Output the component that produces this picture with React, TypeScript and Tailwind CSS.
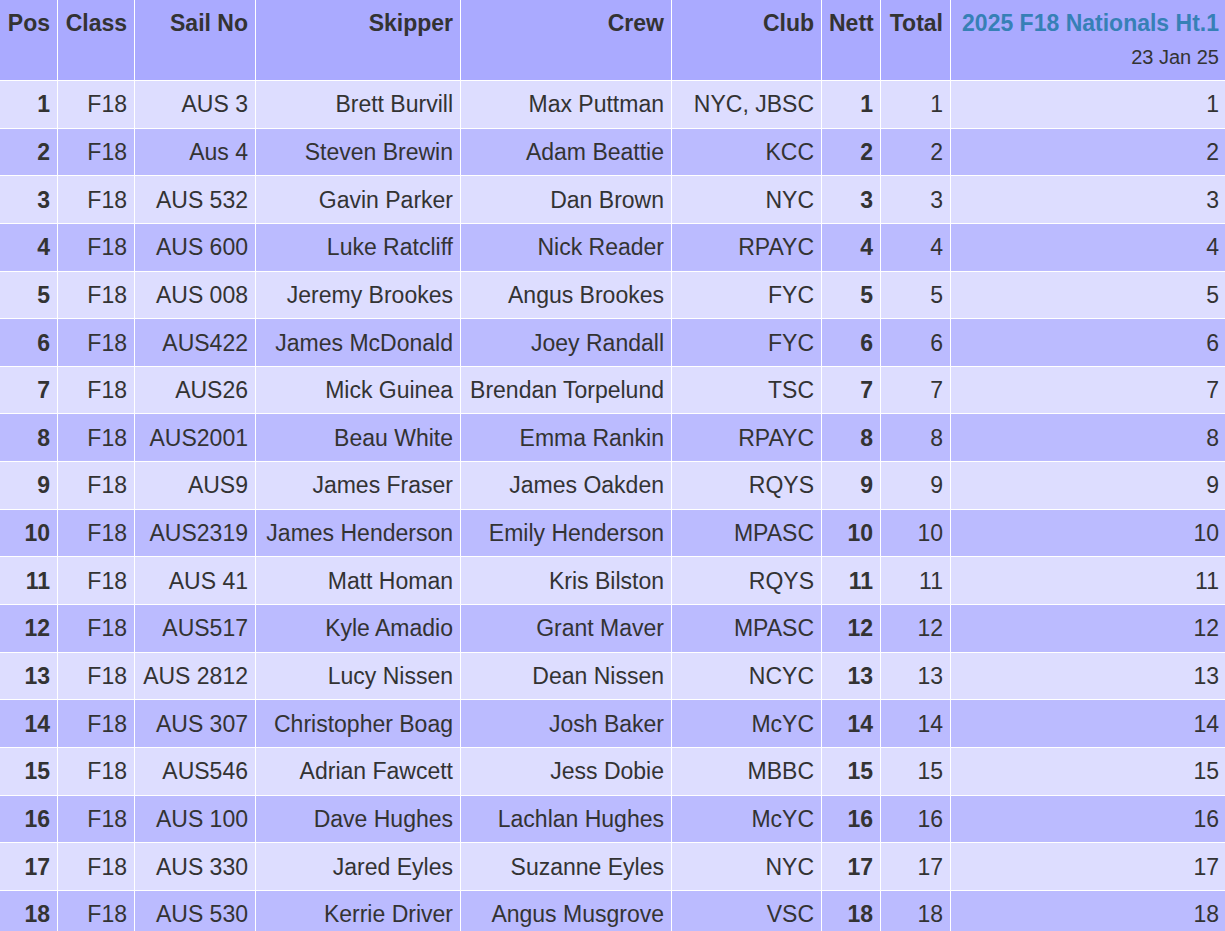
import React from 'react';

type Row = [string, string, string, string, string, string];

const rows: Row[] = [
  ['1', 'F18', 'AUS 3', 'Brett Burvill', 'Max Puttman', 'NYC, JBSC'],
  ['2', 'F18', 'Aus 4', 'Steven Brewin', 'Adam Beattie', 'KCC'],
  ['3', 'F18', 'AUS 532', 'Gavin Parker', 'Dan Brown', 'NYC'],
  ['4', 'F18', 'AUS 600', 'Luke Ratcliff', 'Nick Reader', 'RPAYC'],
  ['5', 'F18', 'AUS 008', 'Jeremy Brookes', 'Angus Brookes', 'FYC'],
  ['6', 'F18', 'AUS422', 'James McDonald', 'Joey Randall', 'FYC'],
  ['7', 'F18', 'AUS26', 'Mick Guinea', 'Brendan Torpelund', 'TSC'],
  ['8', 'F18', 'AUS2001', 'Beau White', 'Emma Rankin', 'RPAYC'],
  ['9', 'F18', 'AUS9', 'James Fraser', 'James Oakden', 'RQYS'],
  ['10', 'F18', 'AUS2319', 'James Henderson', 'Emily Henderson', 'MPASC'],
  ['11', 'F18', 'AUS 41', 'Matt Homan', 'Kris Bilston', 'RQYS'],
  ['12', 'F18', 'AUS517', 'Kyle Amadio', 'Grant Maver', 'MPASC'],
  ['13', 'F18', 'AUS 2812', 'Lucy Nissen', 'Dean Nissen', 'NCYC'],
  ['14', 'F18', 'AUS 307', 'Christopher Boag', 'Josh Baker', 'McYC'],
  ['15', 'F18', 'AUS546', 'Adrian Fawcett', 'Jess Dobie', 'MBBC'],
  ['16', 'F18', 'AUS 100', 'Dave Hughes', 'Lachlan Hughes', 'McYC'],
  ['17', 'F18', 'AUS 330', 'Jared Eyles', 'Suzanne Eyles', 'NYC'],
  ['18', 'F18', 'AUS 530', 'Kerrie Driver', 'Angus Musgrove', 'VSC'],
];

const th = 'bg-[#aaaaff] align-top text-right font-bold px-[7px] pt-[11px] leading-6 whitespace-nowrap';
const td = 'h-[46.65px] py-0 px-[7px] text-right leading-6 whitespace-nowrap';

const App = () => {
  return (
    <div className="w-[1225px] h-[931px] overflow-hidden bg-white">
      <table
        className="-m-px table-fixed w-[1228px] border-separate border-spacing-[1px] text-[23px] text-[#333333]"
        style={{ fontFamily: '"Liberation Sans", Arial, sans-serif' }}
      >
        <colgroup>
          <col className="w-[57px]" />
          <col className="w-[76px]" />
          <col className="w-[120px]" />
          <col className="w-[204px]" />
          <col className="w-[210px]" />
          <col className="w-[149px]" />
          <col className="w-[58px]" />
          <col className="w-[69px]" />
          <col className="w-[275px]" />
        </colgroup>
        <thead>
          <tr className="h-[80px]">
            <th className={th}>Pos</th>
            <th className={th}>Class</th>
            <th className={th}>Sail No</th>
            <th className={th}>Skipper</th>
            <th className={th}>Crew</th>
            <th className={th}>Club</th>
            <th className={th}>Nett</th>
            <th className={th}>Total</th>
            <th className={th}>
              <div className="text-[#3680b6]">2025 F18 Nationals Ht.1</div>
              <div className="mt-[10px] font-normal text-[20px]">23 Jan 25</div>
            </th>
          </tr>
        </thead>
        <tbody>
          {rows.map((r, i) => (
            <tr key={r[0]} className={i % 2 === 0 ? 'bg-[#ddddff]' : 'bg-[#bbbbff]'}>
              <td className={`${td} font-bold`}>{r[0]}</td>
              <td className={td}>{r[1]}</td>
              <td className={td}>{r[2]}</td>
              <td className={td}>{r[3]}</td>
              <td className={td}>{r[4]}</td>
              <td className={td}>{r[5]}</td>
              <td className={`${td} font-bold`}>{r[0]}</td>
              <td className={td}>{r[0]}</td>
              <td className={td}>{r[0]}</td>
            </tr>
          ))}
        </tbody>
      </table>
    </div>
  );
};

export default App;
